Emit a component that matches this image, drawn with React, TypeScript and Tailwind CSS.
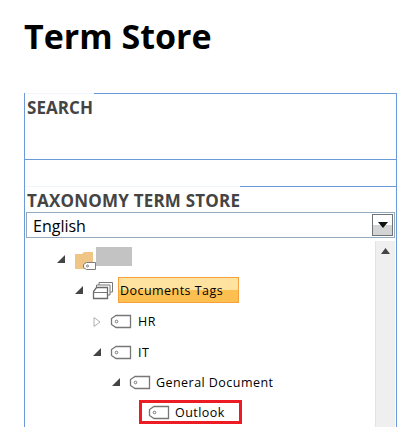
const Arrow = ({ open = true }: { open?: boolean }) =>
  open ? (
    <svg width="10" height="10" viewBox="0 0 10 10" className="shrink-0">
      <path d="M9 1V9H1Z" fill="#444" />
    </svg>
  ) : (
    <svg width="10" height="12" viewBox="0 0 10 12" className="shrink-0">
      <path d="M2 1.500L8 6L2 10.500Z" fill="#fff" stroke="#b0b0b0" />
    </svg>
  );

const Tag = () => (
  <svg width="22" height="15" viewBox="0 0 22 15" className="shrink-0">
    <path d="M6 1.500H20.500V13.500H6L1.500 10.500V4.500Z" fill="#fff" stroke="#777" strokeWidth="1.300" />
    <circle cx="6.500" cy="7.500" r="1.300" fill="none" stroke="#777" />
  </svg>
);

const Folder = () => (
  <svg width="21" height="20" viewBox="0 0 21 20" className="shrink-0">
    <path d="M0 3H7L9 1H18V15H10V18H0Z" fill="#efc685" />
    <path d="M11.500 11.500H20.500V18.500H11.500L8.500 16.500V13.500Z" fill="#fff" stroke="#7d7d7d" />
    <circle cx="12.500" cy="15" r="1" fill="none" stroke="#7d7d7d" />
  </svg>
);

const Group = () => (
  <svg width="22" height="20" viewBox="0 0 22 20" className="shrink-0">
    <path d="M7 5V2.500H20.500V12H18" fill="none" stroke="#777" />
    <path d="M4.500 7.500V5H18V15H16" fill="#fff" stroke="#777" />
    <path d="M4.500 7.500H15.500V18.500H1.500V11.500Z" fill="#fff" stroke="#6a6a6a" strokeWidth="1.300" />
    <path d="M2 12.500H15" stroke="#777" />
  </svg>
);

const rowText = "text-[12.5px] tracking-[0.45px] text-black leading-none pt-[2px]";

export default function App() {
  return (
    <div
      className="h-[427px] w-[400px] overflow-hidden bg-white pl-6"
      style={{ fontFamily: '"Open Sans", "Noto Sans", sans-serif' }}
    >
      <h1 className="h-[93px] pt-[15px] text-[34px] font-bold leading-[42px] text-black">Term Store</h1>
      <div className="w-[373px] border-x border-[#6a9bd8]">
        <section className="h-[66px] pl-0.5">
          <div className="-ml-0.5 flex h-px">
            <div className="w-[69px] bg-[#f3f6fd]" />
            <div className="flex-1 bg-[#6a9bd8]" />
          </div>
          <h2 className="pt-[3px] text-[17px] font-bold leading-[22px] tracking-[0.05px] text-[#444444]">SEARCH</h2>
        </section>
        <div className="h-[27px] border-t border-[#6a9bd8]" />
        <section className="relative h-[241px]">
          <div className="flex h-px">
            <div className="w-[215px] bg-[#eef5fb]" />
            <div className="flex-1 bg-[#6a9bd8]" />
          </div>
          <h2 className="pl-0.5 pt-[3px] text-[17px] font-bold leading-[22px] tracking-[0.2px] text-[#444444]">
            TAXONOMY TERM STORE
          </h2>
          <div className="mx-px flex h-[26px] items-center justify-between border border-[#92a9c0] pl-[6px] pr-px">
            <span className="pt-px text-[16px] leading-none text-black">English</span>
            <div className="flex h-[22px] w-[21px] items-center justify-center border border-[#6f7478] bg-gradient-to-b from-white from-50% to-[#d4d4d4] to-50%">
              <svg width="10" height="6" viewBox="0 0 10 6">
                <path d="M0 0H10L5 6Z" fill="#111" />
              </svg>
            </div>
          </div>
          <div className="absolute bottom-0 right-px top-[55px] flex w-[20px] justify-center border-l border-[#e3e3e3] bg-[#efefef] pt-[7px]">
            <svg width="9" height="6" viewBox="0 0 9 6">
              <path d="M4.500 0L9 6H0Z" fill="#444" />
            </svg>
          </div>
          <div className="flex flex-col pt-[8px]">
            <div className="ml-[31px] flex h-[26px] items-center">
              <Arrow />
              <span className="ml-[9px] mt-[4px]"><Folder /></span>
              <div className="-mt-[5px] h-[19px] w-[36px] bg-[#c3c3c3]" />
            </div>
            <div className="ml-[49px] mt-[3px] flex h-[30px] items-center">
              <Arrow />
              <span className="ml-[8px]"><Group /></span>
              <div className={`ml-[4px] flex h-[26px] w-[121px] items-center border border-[#f6a13c] bg-gradient-to-b from-[#fee29f] from-50% to-[#fdc050] to-50% pl-px ${rowText}`}>
                Documents Tags
              </div>
            </div>
            <div className="ml-[67px] mt-px flex h-[31px] items-center">
              <Arrow open={false} />
              <span className="ml-[8px]"><Tag /></span>
              <span className={`ml-[6px] ${rowText}`}>HR</span>
            </div>
            <div className="ml-[67px] flex h-[30px] items-center">
              <Arrow />
              <span className="ml-[8px]"><Tag /></span>
              <span className={`ml-[6px] ${rowText}`}>IT</span>
            </div>
            <div className="ml-[86px] flex h-[30px] items-center">
              <Arrow />
              <span className="ml-[8px]"><Tag /></span>
              <span className={`ml-[5px] ${rowText}`}>General Document</span>
            </div>
            <div className="ml-[114px] mt-[3px] flex h-[24px] w-[103px] items-center border-[3px] border-[#ed1c24] pl-[6px]">
              <Tag />
              <span className={`ml-[5px] ${rowText}`}>Outlook</span>
            </div>
          </div>
        </section>
      </div>
    </div>
  );
}
